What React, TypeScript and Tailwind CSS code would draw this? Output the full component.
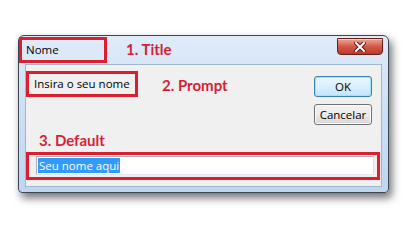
export default function App() {
  const ui = { fontFamily: '"Open Sans", "Noto Sans", Arial, sans-serif' };
  const note = { fontFamily: 'Lato, "Open Sans", Arial, sans-serif' };

  return (
    <div className="w-[418px] h-[220px] bg-white overflow-hidden pt-[35px] pl-[18px]">
      {/* window */}
      <div className="w-[371px] h-[158px] flex flex-col rounded-t-[6px] rounded-b-[4px] border border-[#3b4654] bg-gradient-to-b from-[#dfebf9] via-[#cddff3] to-[#c0d6ef] shadow-[3px_5px_9px_rgba(0,0,0,0.55)]">
        {/* title bar */}
        <div className="h-[28px] flex items-start pt-[1px] pr-[5px]">
          <div
            className="w-[88px] h-[26px] border-[3px] border-[#dc1f2e] flex items-center pl-[4px] text-[11.5px] text-black"
            style={ui}
          >
            Nome
          </div>
          <div className="ml-[19px] mt-[2px] text-[15px] font-bold text-[#d41f35] leading-[20px]" style={note}>
            1. Title
          </div>
          <div className="ml-auto w-[46px] h-[17px] mt-[1px] rounded-b-[4px] border border-[#6b1d16] bg-gradient-to-b from-[#e9a597] via-[#d5574a] to-[#b73a2d] flex items-center justify-center shadow-[inset_0_1px_0_rgba(255,255,255,0.5)]">
            <svg width="12" height="10" viewBox="0 0 12 10">
              <path d="M2 1 L10 9 M10 1 L2 9" stroke="#5a1a14" strokeWidth="4" strokeLinecap="square" />
              <path d="M2 1 L10 9 M10 1 L2 9" stroke="#ffffff" strokeWidth="2" strokeLinecap="square" />
            </svg>
          </div>
        </div>

        {/* client area */}
        <div className="mx-[6px] w-[357px] h-[123px] bg-[#f0f0f0] border border-[#9fb6cf] flex flex-col">
          <div className="h-[65px] flex items-start">
            <div
              className="mt-[6px] w-[112px] h-[26px] border-[3px] border-[#dc1f2e] flex items-center pl-[5px] text-[11.5px] text-black"
              style={ui}
            >
              Insira o seu nome
            </div>
            <div className="ml-[24px] mt-[10px] text-[15px] font-bold text-[#d41f35] leading-[20px]" style={note}>
              2. Prompt
            </div>
            <div className="ml-auto mr-[9px] mt-[11px] flex flex-col gap-[7px]" style={ui}>
              <div className="w-[58px] h-[21px] rounded-[3px] border border-[#3c7fb1] bg-gradient-to-b from-[#eaf6fd] via-[#d9f0fc] to-[#bee6fd] shadow-[inset_0_0_0_1px_#9ee3fb] flex items-center justify-center text-[11.5px] text-black">
                OK
              </div>
              <div className="w-[58px] h-[21px] rounded-[3px] border border-[#707070] bg-gradient-to-b from-[#f2f2f2] via-[#ebebeb] to-[#d6d6d6] shadow-[inset_0_0_0_1px_#fcfcfc] flex items-center justify-center text-[11.5px] text-black">
                Cancelar
              </div>
            </div>
          </div>
          <div className="ml-[13px] text-[15px] font-bold text-[#d41f35] leading-[20px]" style={note}>
            3. Default
          </div>
          <div className="mt-[2px] w-[354px] h-[28px] border-[3px] border-[#dc1f2e] pl-[7px] pr-[3px] pt-[1px]">
            <div className="h-[19px] bg-white border border-[#abadb3] border-b-[#e3e9ef] border-r-[#dbdfe6] flex items-center pl-[1px]">
              <span className="bg-[#3399ff] text-white text-[11.5px] leading-[15px] px-[1px]" style={ui}>
                Seu nome aqui
              </span>
            </div>
          </div>
        </div>
      </div>
    </div>
  );
}
